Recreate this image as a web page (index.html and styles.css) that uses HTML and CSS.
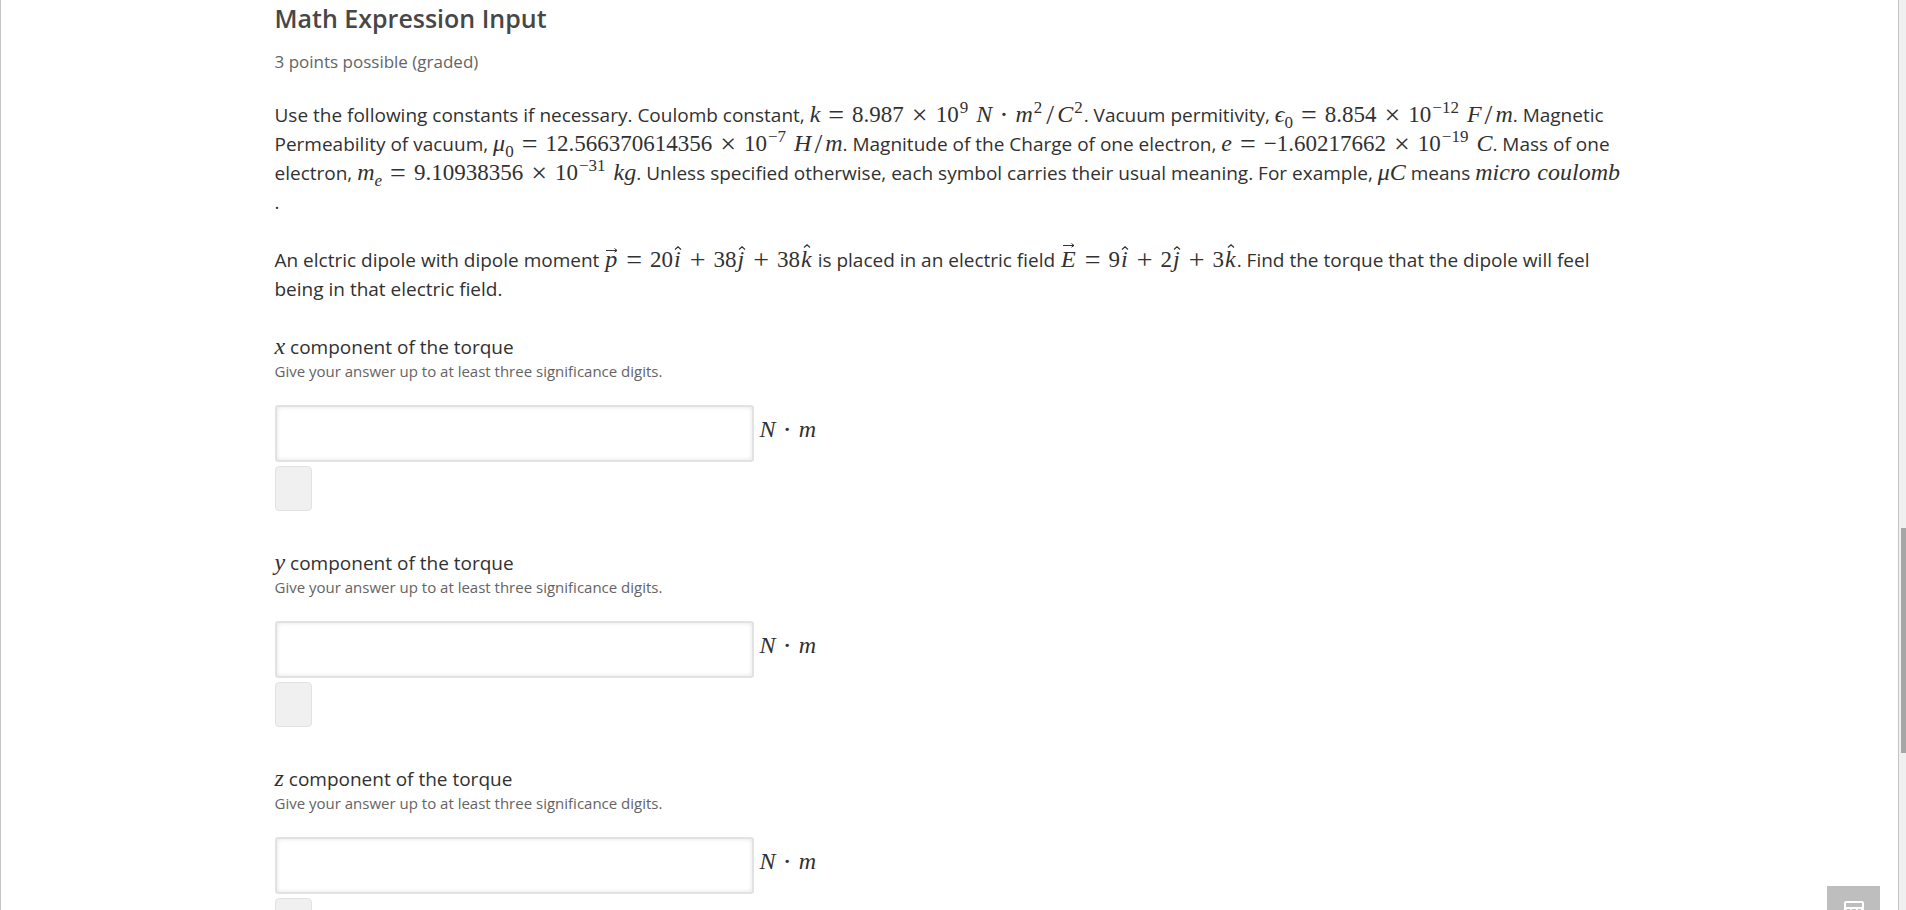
FILE: index.html
```html
<!DOCTYPE html>
<html lang="en">
<head>
<meta charset="utf-8">
<title>Math Expression Input</title>
<link rel="stylesheet" href="styles.css">
</head>
<body>
<svg width="0" height="0" class="defs" aria-hidden="true">
<symbol id="hat" viewBox="0 0 8 4"><path d="M1 3.5L4 .8l3 2.7" fill="none" stroke="#313131" stroke-width="1.2"/></symbol>
<symbol id="vec" viewBox="0 0 12 5"><path d="M0 2.5h11M8.5.5L11 2.5 8.5 4.2" fill="none" stroke="#313131" stroke-width="1"/></symbol>
</svg>
<main class="page">
<article class="problem">
<h1 class="title">Math Expression Input</h1>
<p class="points">3 points possible (graded)</p>
<p class="text">Use the following constants if necessary. Coulomb constant, <span class="math"><i>k</i><span class="op">=</span>8.987<span class="op">×</span>10<sup>9</sup><i class="gap">N</i><span class="op dot">·</span><i>m</i><sup>2</sup><span class="slash">/</span><i>C</i><sup>2</sup></span>. Vacuum permitivity, <span class="math"><i>ϵ</i><sub>0</sub><span class="op">=</span>8.854<span class="op">×</span>10<sup>−12</sup><i class="gap">F</i><span class="slash">/</span><i>m</i></span>. Magnetic<br>
Permeability of vacuum, <span class="math"><i>μ</i><sub>0</sub><span class="op">=</span>12.566370614356<span class="op">×</span>10<sup>−7</sup><i class="gap">H</i><span class="slash">/</span><i>m</i></span>. Magnitude of the Charge of one electron, <span class="math"><i>e</i><span class="op">=</span>−1.60217662<span class="op">×</span>10<sup>−19</sup><i class="gap">C</i></span>. Mass of one<br>
electron, <span class="math"><i>m</i><sub><i>e</i></sub><span class="op">=</span>9.10938356<span class="op">×</span>10<sup>−31</sup><i class="gap">kg</i></span>. Unless specified otherwise, each symbol carries their usual meaning. For example, <span class="math"><i>μC</i></span> means <span class="math"><i>micro</i><i class="gap">coulomb</i></span><br>
.</p>
<p class="text">An elctric dipole with dipole moment <span class="math"><span class="accent"><i>p</i><svg class="vec"><use href="#vec"/></svg></span><span class="op">=</span>20<span class="accent"><i>i</i><svg class="hat"><use href="#hat"/></svg></span><span class="op">+</span>38<span class="accent"><i>j</i><svg class="hat"><use href="#hat"/></svg></span><span class="op">+</span>38<span class="accent"><i>k</i><svg class="hat tall"><use href="#hat"/></svg></span></span> is placed in an electric field <span class="math"><span class="accent"><i>E</i><svg class="vec tall"><use href="#vec"/></svg></span><span class="op">=</span>9<span class="accent"><i>i</i><svg class="hat"><use href="#hat"/></svg></span><span class="op">+</span>2<span class="accent"><i>j</i><svg class="hat"><use href="#hat"/></svg></span><span class="op">+</span>3<span class="accent"><i>k</i><svg class="hat tall"><use href="#hat"/></svg></span></span>. Find the torque that the dipole will feel<br>
being in that electric field.</p>
<section class="answer">
<label class="label" for="tx"><span class="math"><i>x</i></span> component of the torque</label>
<p class="hint">Give your answer up to at least three significance digits.</p>
<div class="entry"><input class="field" id="tx" type="text"><span class="math unit"><i>N</i><span class="op dot">·</span><i>m</i></span></div>
<div class="status"></div>
</section>
<section class="answer">
<label class="label" for="ty"><span class="math"><i>y</i></span> component of the torque</label>
<p class="hint">Give your answer up to at least three significance digits.</p>
<div class="entry"><input class="field" id="ty" type="text"><span class="math unit"><i>N</i><span class="op dot">·</span><i>m</i></span></div>
<div class="status"></div>
</section>
<section class="answer">
<label class="label" for="tz"><span class="math"><i>z</i></span> component of the torque</label>
<p class="hint">Give your answer up to at least three significance digits.</p>
<div class="entry"><input class="field" id="tz" type="text"><span class="math unit"><i>N</i><span class="op dot">·</span><i>m</i></span></div>
<div class="status"></div>
</section>
</article>
</main>
<div class="scrollbar"><div class="thumb"></div></div>
<button class="calculator" type="button" aria-label="Calculator">
<svg width="20" height="24" viewBox="0 0 20 24" fill="#fff"><path fill-rule="evenodd" d="M2 0h16a2 2 0 0 1 2 2v20a2 2 0 0 1-2 2H2a2 2 0 0 1-2-2V2a2 2 0 0 1 2-2zm0 2v4h16V2zm1 6v2h3V8zm5 0v2h4V8zm6 0v2h3V8z"/></svg>
</button>
</body>
</html>
```
FILE: styles.css
```css
* { box-sizing: border-box; }
body {
  margin: 0;
  display: flex;
  height: 100vh;
  overflow: hidden;
  background: #fff;
  color: #313131;
  font-family: "Open Sans", "Noto Sans", sans-serif;
  font-size: 19px;
  line-height: 29px;
}
.defs { position: absolute; }
.page {
  flex: 1;
  border-left: 1px solid #c4c4c4;
  border-right: 1px solid #c4c4c4;
  overflow: hidden;
}
.problem { max-width: 1350px; margin: 0 auto; }
.title {
  margin: 0 0 16px;
  font-size: 25px;
  line-height: 36px;
  font-weight: 600;
  color: #474747;
}
.points { margin: 0 0 29px; font-size: 17px; line-height: 20px; color: #646464; }
.text { margin: 0 0 29px; white-space: nowrap; }
.math {
  font-family: "Liberation Serif", serif;
  font-size: 23px;
  line-height: 1px;
  white-space: nowrap;
}
.math i { font-size: 24px; }
.math sup, .math sub, .math sub i { font-size: 17px; line-height: 1px; }
.math sup { margin: 0 1px; }
.op { margin: 0 8px; font-size: 28px; line-height: 1px; vertical-align: -2px; }
.dot { margin: 0 7px; }
.slash { margin: 0 3px; font-size: 28px; line-height: 1px; vertical-align: -2px; }
.gap { margin-left: 7px; }
.accent { position: relative; margin: 0 1px; }
.hat, .vec { position: absolute; bottom: 22px; left: 50%; }
.hat { width: 8px; height: 4px; margin-left: -3px; }
.vec { width: 12px; height: 5px; margin-left: -5px; bottom: 19px; }
.hat.tall, .vec.tall { bottom: 24px; }
.answer { margin-bottom: 38px; }
.label { display: block; line-height: 28px; }
.hint { margin: 0 0 24px; font-size: 15px; line-height: 20px; color: #646464; }
.entry { display: flex; align-items: center; gap: 6px; }
.unit { padding-bottom: 8px; }
.field {
  width: 479px;
  height: 57px;
  border: 2px solid #e2e2e2;
  border-radius: 3px;
  padding: 0 16px;
  background: #fff;
  box-shadow: inset 0 0 4px rgba(0, 0, 0, .12);
  font: inherit;
}
.status {
  width: 37px;
  height: 45px;
  margin-top: 4px;
  border: 1px solid #e2e2e2;
  border-radius: 4px;
  background: #f0f0f0;
}
.scrollbar { width: 7px; padding: 528px 0 0 2px; background: #f0f0f0; }
.thumb { height: 225px; background: #a6a6a6; }
.calculator {
  position: fixed;
  right: 26px;
  bottom: -24px;
  width: 53px;
  height: 48px;
  border: 0;
  padding: 15px 0 0;
  background: #bebebe;
  display: flex;
  align-items: flex-start;
  justify-content: center;
}
```
